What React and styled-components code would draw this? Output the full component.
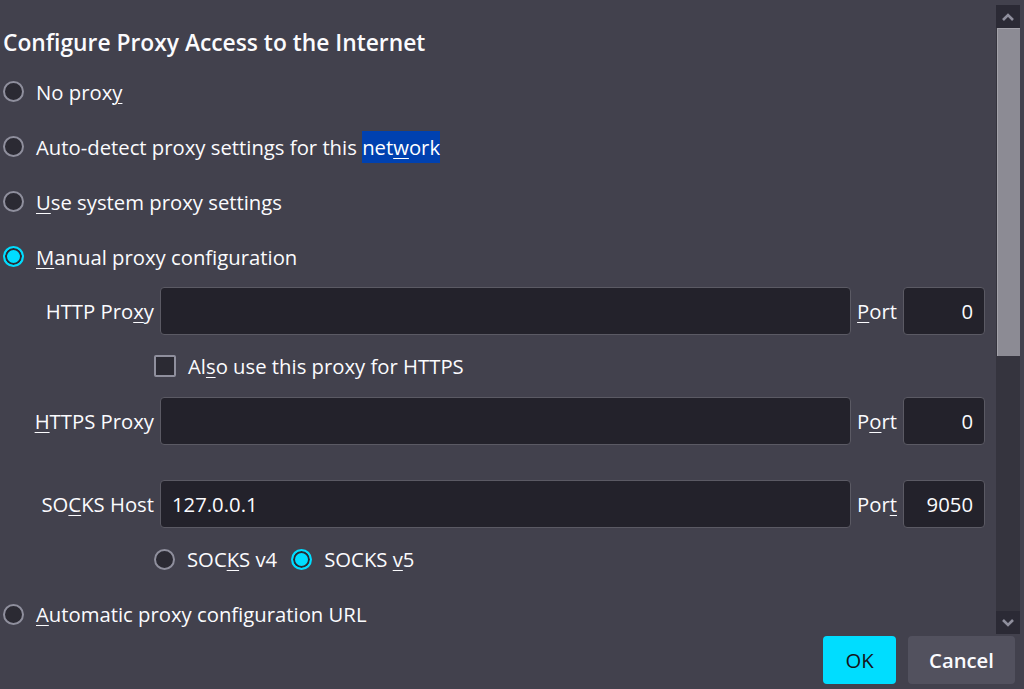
import React from "react";
import styled, { createGlobalStyle } from "styled-components";

const GlobalStyle = createGlobalStyle`
  html, body {
    margin: 0;
    padding: 0;
    background: #42414d;
  }
  body {
    font-family: "Open Sans", "Noto Sans", sans-serif;
    color: #fbfbfe;
  }
  u {
    text-decoration-thickness: 1px;
    text-underline-offset: 3px;
  }
`;

const Dialog = styled.div`
  width: 1024px;
  height: 689px;
  display: flex;
  flex-direction: column;
  background: #42414d;
  overflow: hidden;
`;

const Body = styled.div`
  height: 634px;
  display: flex;
  overflow: hidden;
`;

const Content = styled.div`
  flex: 1;
  padding: 28px 11px 0 3px;
`;

const Title = styled.h1`
  margin: 0 0 6px 0;
  height: 30px;
  line-height: 30px;
  font-size: 22.8px;
  font-weight: 600;
  white-space: nowrap;
`;

const OptionRow = styled.label`
  display: flex;
  align-items: center;
  gap: 12px;
  height: ${(p) => p.$h || 55}px;
  font-size: 20.3px;
  white-space: nowrap;
  padding-left: ${(p) => p.$indent || 0}px;
`;

const Radio = styled.span`
  width: 21px;
  height: 21px;
  box-sizing: border-box;
  border-radius: 50%;
  flex-shrink: 0;
  border: 2px solid ${(p) => (p.$checked ? "#00ddff" : "#8f8f9d")};
  background: ${(p) => (p.$checked ? "#00ddff" : "#2b2a33")};
  box-shadow: ${(p) => (p.$checked ? "inset 0 0 0 2px #2b2a33" : "none")};
`;

const Checkbox = styled.span`
  width: 22px;
  height: 22px;
  box-sizing: border-box;
  border-radius: 2px;
  flex-shrink: 0;
  border: 2px solid #8f8f9d;
  background: #2b2a33;
`;

const Highlight = styled.span`
  background: #0041b0;
  color: #ffffff;
  padding: 2px 0;
`;

const ProxyGrid = styled.div`
  display: grid;
  grid-template-columns: 154px 1fr auto 82px;
  column-gap: 6px;
  align-items: center;
  height: 48px;
  margin-top: ${(p) => p.$top || 0}px;
  margin-left: -3px;
  font-size: 20.3px;
`;

const FieldLabel = styled.span`
  text-align: right;
  white-space: nowrap;
`;

const TextField = styled.div`
  height: 48px;
  box-sizing: border-box;
  border: 1px solid #5b5a64;
  border-radius: 4px;
  background: #23222b;
  display: flex;
  align-items: center;
  justify-content: ${(p) => (p.$right ? "flex-end" : "flex-start")};
  padding: 0 11px;
`;

const SocksRow = styled.div`
  display: flex;
  align-items: center;
  height: 62px;
  padding-left: 151px;
  font-size: 20.3px;
  gap: 14px;
`;

const SocksOption = styled.span`
  display: flex;
  align-items: center;
  gap: 12px;
`;

const ScrollBar = styled.div`
  width: 24px;
  margin: 5px 4px 0 0;
  display: flex;
  flex-direction: column;
  background: #35343e;
`;

const ScrollButton = styled.div`
  height: 23px;
  background: #2b2a35;
  display: flex;
  align-items: center;
  justify-content: center;
`;

const Thumb = styled.div`
  height: 328px;
  margin-left: 1px;
  background: #8c8b94;
  box-shadow: inset 1px 1px 0 #a3a2aa;
`;

const Track = styled.div`
  flex: 1;
`;

const Footer = styled.div`
  display: flex;
  justify-content: flex-end;
  gap: 12px;
  padding: 2px 9px 0 0;
`;

const Button = styled.button`
  height: 48px;
  min-width: ${(p) => p.$w}px;
  border: none;
  border-radius: 4px;
  font-family: "Open Sans", "Noto Sans", sans-serif;
  font-size: 20.3px;
  font-weight: ${(p) => (p.$primary ? 400 : 600)};
  color: ${(p) => (p.$primary ? "#15141a" : "#fbfbfe")};
  background: ${(p) => (p.$primary ? "#00ddff" : "#52515e")};
  padding: 0 16px;
`;

const Chevron = ({ up }) => (
  <svg width="14" height="10" viewBox="0 0 14 10">
    <path
      d={up ? "M2 8 L7 3 L12 8" : "M2 2 L7 7 L12 2"}
      fill="none"
      stroke="#8f8f9d"
      strokeWidth="2.6"
    />
  </svg>
);

export default function App() {
  return (
    <Dialog>
      <GlobalStyle />
      <Body>
        <Content>
          <Title>Configure Proxy Access to the Internet</Title>
          <OptionRow>
            <Radio />
            <span>
              No prox<u>y</u>
            </span>
          </OptionRow>
          <OptionRow>
            <Radio />
            <span>
              Auto-detect proxy settings for this{" "}
              <Highlight>
                net<u>w</u>ork
              </Highlight>
            </span>
          </OptionRow>
          <OptionRow>
            <Radio />
            <span>
              <u>U</u>se system proxy settings
            </span>
          </OptionRow>
          <OptionRow>
            <Radio $checked />
            <span>
              <u>M</u>anual proxy configuration
            </span>
          </OptionRow>

          <ProxyGrid $top={3}>
            <FieldLabel>
              HTTP Pro<u>x</u>y
            </FieldLabel>
            <TextField />
            <span>
              <u>P</u>ort
            </span>
            <TextField $right>0</TextField>
          </ProxyGrid>

          <OptionRow $h={62} $indent={151}>
            <Checkbox />
            <span>
              Al<u>s</u>o use this proxy for HTTPS
            </span>
          </OptionRow>

          <ProxyGrid>
            <FieldLabel>
              <u>H</u>TTPS Proxy
            </FieldLabel>
            <TextField />
            <span>
              P<u>o</u>rt
            </span>
            <TextField $right>0</TextField>
          </ProxyGrid>

          <ProxyGrid $top={35}>
            <FieldLabel>
              SO<u>C</u>KS Host
            </FieldLabel>
            <TextField>127.0.0.1</TextField>
            <span>
              Por<u>t</u>
            </span>
            <TextField $right>9050</TextField>
          </ProxyGrid>

          <SocksRow>
            <SocksOption>
              <Radio />
              <span>
                SOC<u>K</u>S v4
              </span>
            </SocksOption>
            <SocksOption>
              <Radio $checked />
              <span>
                SOCKS <u>v</u>5
              </span>
            </SocksOption>
          </SocksRow>

          <OptionRow $h={48}>
            <Radio />
            <span>
              <u>A</u>utomatic proxy configuration URL
            </span>
          </OptionRow>
        </Content>
        <ScrollBar>
          <ScrollButton>
            <Chevron up />
          </ScrollButton>
          <Thumb />
          <Track />
          <ScrollButton>
            <Chevron />
          </ScrollButton>
        </ScrollBar>
      </Body>
      <Footer>
        <Button $primary $w={73}>
          OK
        </Button>
        <Button $w={107}>Cancel</Button>
      </Footer>
    </Dialog>
  );
}
